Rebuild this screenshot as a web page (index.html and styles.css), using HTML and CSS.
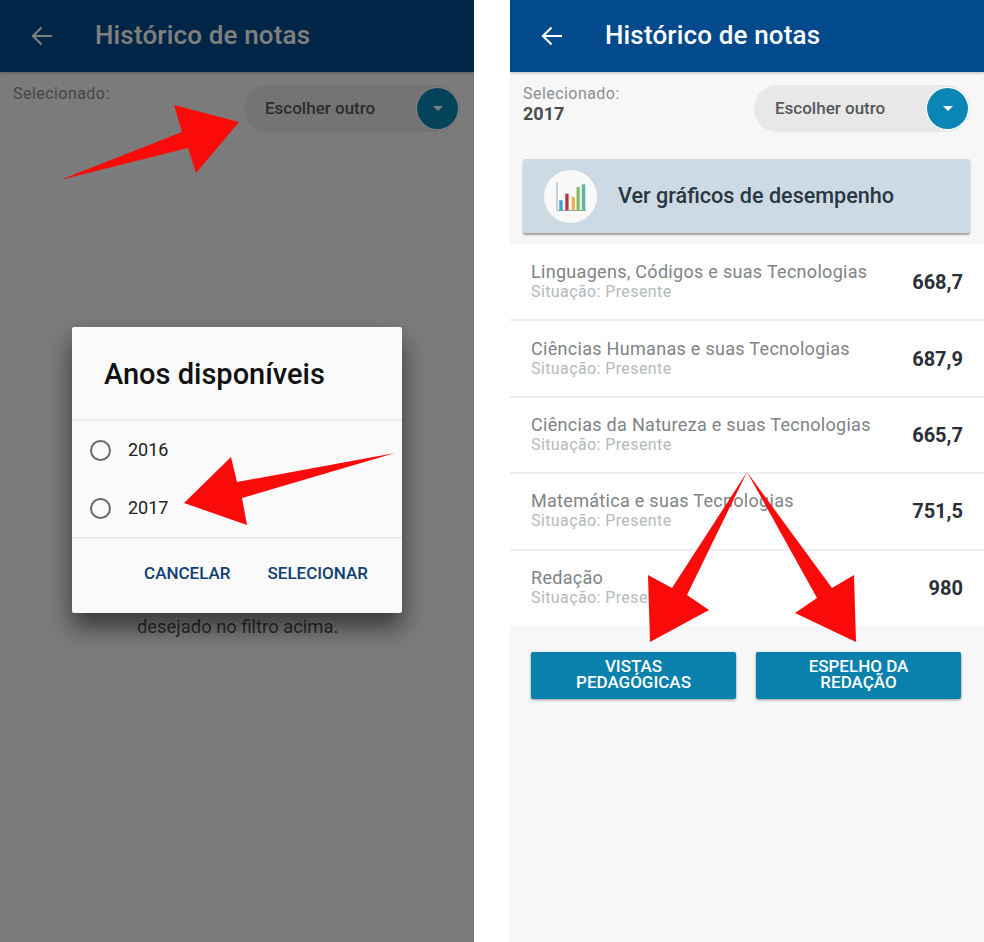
FILE: index.html
```html
<!DOCTYPE html>
<html lang="pt-BR">
<head>
    <meta charset="UTF-8">
    <meta name="viewport" content="width=device-width, initial-scale=1.0">
    <title>Histórico de notas</title>
    <link rel="stylesheet" href="styles.css">
</head>
<body>
    <div class="shot">
        <div class="phone">
            <div class="topbar">
                <svg class="back" viewBox="0 0 24 24"><path d="M22 12H3M11.5 3.5L3 12l8.500 8.500"/></svg>
                <h1>Histórico de notas</h1>
            </div>
            <div class="filter">
                <div class="selected">
                    <div class="selected-label">Selecionado:</div>
                </div>
                <div class="pill">
                    <span>Escolher outro</span>
                    <div class="pill-btn"><div class="caret"></div></div>
                </div>
            </div>
            <p class="empty-msg">desejado no filtro acima.</p>

            <div class="dim"></div>
            <div class="dialog">
                <h2>Anos disponíveis</h2>
                <div class="years">
                    <div class="year"><div class="radio"></div><span>2016</span></div>
                    <div class="year"><div class="radio"></div><span>2017</span></div>
                </div>
                <div class="actions">
                    <span>CANCELAR</span>
                    <span>SELECIONAR</span>
                </div>
            </div>
        </div>

        <div class="phone">
            <div class="topbar">
                <svg class="back" viewBox="0 0 24 24"><path d="M22 12H3M11.5 3.5L3 12l8.500 8.500"/></svg>
                <h1>Histórico de notas</h1>
            </div>
            <div class="filter">
                <div class="selected">
                    <div class="selected-label">Selecionado:</div>
                    <div class="selected-year">2017</div>
                </div>
                <div class="pill">
                    <span>Escolher outro</span>
                    <div class="pill-btn"><div class="caret"></div></div>
                </div>
            </div>
            <div class="charts-card">
                <div class="charts-icon">
                    <svg viewBox="0 0 30 30" width="30" height="30">
                        <path d="M1 1v28.500H30" fill="none" stroke="#9aa7ad" stroke-width="1"/>
                        <rect x="3.300" y="19.300" width="3.300" height="10" fill="#3c9fd0"/>
                        <rect x="9.300" y="12.700" width="3.300" height="16.600" fill="#b8343c"/>
                        <rect x="15.700" y="16" width="3.300" height="13.300" fill="#e9b44c"/>
                        <rect x="20.500" y="6" width="3.300" height="23.300" fill="#86bb6a"/>
                        <rect x="25.700" y="3.300" width="3.600" height="26" fill="#5fb59b"/>
                    </svg>
                </div>
                <span>Ver gráficos de desempenho</span>
            </div>
            <div class="grades">
                <div class="grade">
                    <div class="grade-info">
                        <div class="grade-name">Linguagens, Códigos e suas Tecnologias</div>
                        <div class="grade-status">Situação: Presente</div>
                    </div>
                    <div class="grade-score">668,7</div>
                </div>
                <div class="grade">
                    <div class="grade-info">
                        <div class="grade-name">Ciências Humanas e suas Tecnologias</div>
                        <div class="grade-status">Situação: Presente</div>
                    </div>
                    <div class="grade-score">687,9</div>
                </div>
                <div class="grade">
                    <div class="grade-info">
                        <div class="grade-name">Ciências da Natureza e suas Tecnologias</div>
                        <div class="grade-status">Situação: Presente</div>
                    </div>
                    <div class="grade-score">665,7</div>
                </div>
                <div class="grade">
                    <div class="grade-info">
                        <div class="grade-name">Matemática e suas Tecnologias</div>
                        <div class="grade-status">Situação: Presente</div>
                    </div>
                    <div class="grade-score">751,5</div>
                </div>
                <div class="grade">
                    <div class="grade-info">
                        <div class="grade-name">Redação</div>
                        <div class="grade-status">Situação: Presente</div>
                    </div>
                    <div class="grade-score">980</div>
                </div>
            </div>
            <div class="buttons">
                <button>VISTAS PEDAGÓGICAS</button>
                <button>ESPELHO DA REDAÇÃO</button>
            </div>
        </div>

        <svg class="arrows" viewBox="0 0 984 942">
            <polygon points="60,180 182,132 174,105 239,122 196,173 188,148"/>
            <polygon points="395,453 237,482 231,457 184,503 247,525 242,498"/>
            <polygon points="747,472 672,588 648,575 650,642 709,610 687,595"/>
            <polygon points="747,472 832,588 854,575 856,642 795,613 817,598"/>
        </svg>
    </div>
</body>
</html>
```

FILE: styles.css
```css
* {
    box-sizing: border-box;
}
body {
    margin: 0;
    background-color: white;
    font-family: Roboto, "Liberation Sans", sans-serif;
    overflow: hidden;
}
.shot {
    position: relative;
    display: flex;
    justify-content: space-between;
    width: 984px;
    height: 942px;
}
.phone {
    position: relative;
    width: 474px;
    height: 942px;
    background-color: #f7f7f7;
    overflow: hidden;
}
.topbar {
    display: flex;
    align-items: center;
    height: 72px;
    padding-left: 30px;
    padding-bottom: 1px;
    background-color: #024a8c;
    box-shadow: 0 1px 3px rgba(0,0,0,0.25);
}
.topbar h1 {
    margin: 0 0 2px 41px;
    font-size: 26px;
    font-weight: 500;
    letter-spacing: 0.15px;
    color: white;
}
.back {
    width: 24px;
    height: 24px;
    fill: none;
    stroke: white;
    stroke-width: 2.2;
}
.filter {
    display: flex;
    justify-content: space-between;
    padding: 13px 14px 0 13px;
}
.selected-label {
    font-size: 16px;
    line-height: 18px;
    color: #8b8f93;
    letter-spacing: 0.45px;
}
.selected-year {
    font-size: 18px;
    line-height: 21px;
    font-weight: 700;
    color: #4a4d50;
}
.pill {
    display: flex;
    justify-content: space-between;
    align-items: center;
    width: 216px;
    height: 47px;
    padding: 0 2px 0 21px;
    background-color: #e8e8e8;
    border-radius: 24px;
    font-size: 17px;
    font-weight: 500;
    color: #55585b;
}
.pill span {
    margin-bottom: 2px;
}
.pill-btn {
    display: flex;
    justify-content: center;
    align-items: center;
    width: 41px;
    height: 41px;
    background-color: #0a86b4;
    border-radius: 50%;
    box-shadow: 0 0 0 1px white;
}
.caret {
    border-left: 5px solid transparent;
    border-right: 5px solid transparent;
    border-top: 5px solid white;
}
.charts-card {
    display: flex;
    align-items: center;
    margin: 27px 14px 0 13px;
    height: 74px;
    padding-left: 21px;
    padding-bottom: 2px;
    background-color: #cddae4;
    border-radius: 2px;
    box-shadow: 0 2px 2px rgba(0,0,0,0.35);
    font-size: 21.6px;
    font-weight: 500;
    color: #2a3642;
}
.charts-icon {
    display: flex;
    justify-content: center;
    align-items: center;
    width: 53px;
    height: 53px;
    margin-top: 2px;
    margin-right: 21px;
    background-color: #f8f9f9;
    border-radius: 50%;
}
.grades {
    margin-top: 11px;
    padding-top: 1px;
    background-color: white;
}
.grade {
    display: flex;
    justify-content: space-between;
    align-items: center;
    height: 76.4px;
    padding: 0 21px 0 21px;
    border-bottom: 2px solid #eeeeee;
}
.grade:last-child {
    height: 75.4px;
    border-bottom: none;
}
.grade-info {
    margin-bottom: 2px;
}
.grade-name {
    font-size: 18px;
    line-height: 21px;
    color: #7f8387;
    letter-spacing: 0.3px;
}
.grade-status {
    font-size: 16px;
    line-height: 19px;
    color: #b4b9bd;
    letter-spacing: 0.4px;
}
.grade-score {
    font-size: 20px;
    font-weight: 700;
    color: #2a3038;
}
.buttons {
    display: flex;
    justify-content: space-between;
    padding: 26px 23px 0 21px;
}
.buttons button {
    width: 205px;
    height: 47px;
    padding: 0 35px 2px;
    border: none;
    border-radius: 2px;
    background-color: #0a80ad;
    box-shadow: 0 1px 3px rgba(0,0,0,0.4);
    font-family: inherit;
    font-size: 17px;
    font-weight: 500;
    line-height: 16px;
    color: white;
}
.empty-msg {
    margin: 0;
    position: absolute;
    top: 616px;
    left: 137px;
    font-size: 18.4px;
    line-height: 21px;
    color: #555555;
}
.dim {
    position: absolute;
    top: 0;
    left: 0;
    width: 100%;
    height: 100%;
    background-color: rgba(0,0,0,0.5);
}
.dialog {
    position: absolute;
    top: 327px;
    left: 72px;
    width: 330px;
    height: 286px;
    background-color: #fafafa;
    border-radius: 2px;
    box-shadow: 0 14px 24px rgba(0,0,0,0.55);
}
.dialog h2 {
    display: flex;
    align-items: center;
    height: 92px;
    margin: 0;
    padding-left: 32px;
    padding-top: 2px;
    font-size: 29px;
    font-weight: 500;
    color: #111111;
}
.years {
    height: 120px;
    border-top: 2px solid #ececec;
    border-bottom: 2px solid #ececec;
}
.year {
    display: flex;
    align-items: center;
    height: 58px;
    padding-left: 18px;
    font-size: 18px;
    color: #222222;
}
.year span {
    margin-bottom: 2px;
}
.radio {
    width: 21px;
    height: 21px;
    margin-right: 17px;
    border: 2px solid #6a6a6a;
    border-radius: 50%;
}
.actions {
    display: flex;
    justify-content: flex-end;
    gap: 37px;
    padding: 24px 34px 0 0;
    font-size: 17px;
    font-weight: 500;
    color: #0f3f74;
}
.arrows {
    position: absolute;
    top: 0;
    left: 0;
    width: 984px;
    height: 942px;
    fill: #fb0a0a;
}
```
